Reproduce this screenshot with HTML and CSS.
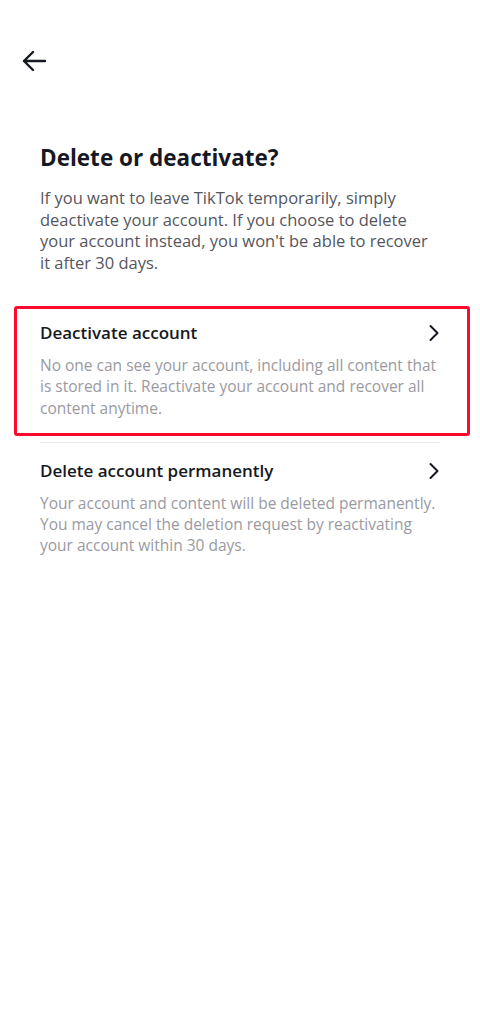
FILE: index.html
```html
<!DOCTYPE html>
<html>
<head>
<meta charset="utf-8">
<link rel="stylesheet" href="styles.css">
</head>
<body>
<div class="page">
  <header class="topbar">
    <button class="back" aria-label="Back">
      <svg width="26" height="22" viewBox="0 0 26 22"><path d="M24 11H3M12 2L3 11l9 9" fill="none" stroke="#161823" stroke-width="2.4" stroke-linecap="round" stroke-linejoin="round"/></svg>
    </button>
  </header>
  <main class="content">
    <h1 class="title">Delete or deactivate?</h1>
    <p class="intro">If you want to leave TikTok temporarily, simply deactivate your account. If you choose to delete your account instead, you won't be able to recover it after 30 days.</p>
    <div class="options">
      <div class="option highlighted">
        <div class="option-head">
          <span class="option-title">Deactivate account</span>
          <svg class="chev" width="12" height="18" viewBox="0 0 12 18"><path d="M2.5 2l7 7-7 7" fill="none" stroke="#161823" stroke-width="2" stroke-linecap="round" stroke-linejoin="round"/></svg>
        </div>
        <p class="option-desc">No one can see your account, including all content that is stored in it. Reactivate your account and recover all content anytime.</p>
      </div>
      <div class="divider"></div>
      <div class="option second">
        <div class="option-head">
          <span class="option-title">Delete account permanently</span>
          <svg class="chev" width="12" height="18" viewBox="0 0 12 18"><path d="M2.5 2l7 7-7 7" fill="none" stroke="#161823" stroke-width="2" stroke-linecap="round" stroke-linejoin="round"/></svg>
        </div>
        <p class="option-desc">Your account and content will be deleted permanently. You may cancel the deletion request by reactivating your account within 30 days.</p>
      </div>
    </div>
  </main>
</div>
</body>
</html>
```
FILE: styles.css
```css
* { box-sizing: border-box; }
html, body { margin: 0; padding: 0; background: #fff; }
body {
  font-family: "Open Sans", "Liberation Sans", sans-serif;
  color: #161823;
  width: 480px;
  height: 1010px;
}
.topbar {
  height: 120px;
  padding: 50px 0 0 21px;
}
.back {
  border: 0;
  background: none;
  padding: 0;
  width: 26px;
  height: 22px;
  display: block;
}
.content { padding: 0 40px; }
.title {
  margin: 0;
  font-size: 22.5px;
  font-weight: 700;
  line-height: 30px;
  padding-top: 23px;
}
.intro {
  margin: 14px 0 0;
  font-size: 16.5px;
  line-height: 21.5px;
  color: #55565e;
}
.options { margin-top: 33px; }
.option {
  padding: 16px 0 16px;
}
.option.highlighted {
  margin: 0 -30px 0 -26px;
  padding: 12px 27px 14px 23px;
  border: 3px solid #fe0a2f;
  border-radius: 3px;
}
.option-head {
  display: flex;
  justify-content: space-between;
  align-items: center;
}
.option-title {
  font-size: 17px;
  font-weight: 600;
  line-height: 24px;
}
.option-desc {
  margin: 10px 0 0;
  font-size: 15.5px;
  line-height: 21.3px;
  color: #9a9a9f;
}
.divider {
  height: 1px;
  background: #e9e9ea;
  margin: 6px 0 0;
}
```
